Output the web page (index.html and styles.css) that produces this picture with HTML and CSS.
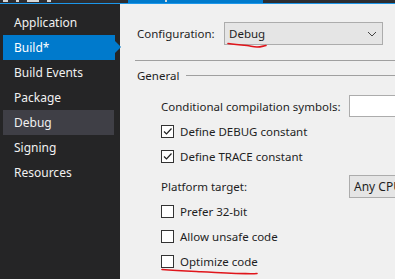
FILE: index.html
```html
<!DOCTYPE html>
<html lang="en">
<head>
    <meta charset="UTF-8">
    <meta name="viewport" content="width=device-width, initial-scale=1.0">
    <title>Project Properties - Build</title>
    <link rel="stylesheet" href="styles.css">
</head>
<body>
    <!-- Document tab strip, only its bottom edge is visible -->
    <div class="tab-strip">
        <div class="tab-ghost">
            <i class="mark" style="width: 5px"></i>
            <i class="mark" style="width: 3px"></i>
            <i class="mark" style="width: 12px"></i>
            <i class="mark" style="width: 4px"></i>
        </div>
        <div class="tab-active">
            <i class="mark" style="width: 2px"></i>
        </div>
    </div>

    <div class="window">
        <!-- Property pages list -->
        <ul class="nav">
            <li class="nav-item">Application</li>
            <li class="nav-item selected">Build*</li>
            <li class="nav-item">Build Events</li>
            <li class="nav-item">Package</li>
            <li class="nav-item hover">Debug</li>
            <li class="nav-item">Signing</li>
            <li class="nav-item">Resources</li>
        </ul>

        <!-- Build page -->
        <div class="page">
            <div class="config-row">
                <span class="label">Configuration:</span>
                <div class="combo config-combo">
                    <span>Debug</span>
                    <svg class="chevron" width="10" height="6" viewBox="0 0 10 6">
                        <path d="M1 1 L5 5 L9 1" fill="none" stroke="#444" stroke-width="1"/>
                    </svg>
                    <svg class="scribble scribble-debug" width="40" height="7" viewBox="0 0 40 7">
                        <path d="M1 1.5 C8 2.5 14 3 20 3.5 C24 4 26 5 30 5 C34 5 36 4 39 3.5" fill="none" stroke="#e0151b" stroke-width="1.6" stroke-linecap="round"/>
                    </svg>
                </div>
            </div>

            <div class="group">
                <div class="group-title">General</div>

                <div class="row symbols-row">
                    <span class="label field-label">Conditional compilation symbols:</span>
                    <div class="textbox"></div>
                </div>

                <label class="row check-row">
                    <span class="box checked">
                        <svg width="11" height="11" viewBox="0 0 11 11"><path d="M2 5.5 L4.5 8 L9.5 2.5" fill="none" stroke="#222" stroke-width="1.2"/></svg>
                    </span>
                    Define DEBUG constant
                </label>

                <label class="row check-row">
                    <span class="box checked">
                        <svg width="11" height="11" viewBox="0 0 11 11"><path d="M2 5.5 L4.5 8 L9.5 2.5" fill="none" stroke="#222" stroke-width="1.2"/></svg>
                    </span>
                    Define TRACE constant
                </label>

                <div class="row platform-row">
                    <span class="label field-label">Platform target:</span>
                    <div class="combo platform-combo">Any CPU</div>
                </div>

                <label class="row check-row">
                    <span class="box"></span>
                    Prefer 32-bit
                </label>

                <label class="row check-row">
                    <span class="box"></span>
                    Allow unsafe code
                </label>

                <label class="row check-row optimize">
                    <span class="box"></span>
                    Optimize code
                    <svg class="scribble scribble-optimize" width="98" height="8" viewBox="0 0 98 8">
                        <path d="M1 1.5 C15 2.5 25 3 40 3.8 C55 4.5 60 5 75 5.5 C85 5.5 90 6 96 5.5" fill="none" stroke="#e0151b" stroke-width="1.6" stroke-linecap="round"/>
                    </svg>
                </label>
            </div>
        </div>
    </div>
</body>
</html>
```

FILE: styles.css
```css
:root {
    --chrome: #2d2d30;
    --nav-bg: #252526;
    --accent: #007acc;
    --hover: #3f3f46;
    --page-bg: #f0f0f0;
    --text: #1e1e1e;
    --border: #acacac;
}

* {
    box-sizing: border-box;
}

body {
    margin: 0;
    font-family: "Noto Sans", "Open Sans", sans-serif;
    font-size: 11.5px;
    color: var(--text);
    background: var(--page-bg);
    overflow: hidden;
}

.tab-strip {
    display: flex;
    height: 4px;
    background: var(--chrome);
    border-bottom: 1px solid #1c97ea;
}

.tab-ghost {
    display: flex;
    gap: 8px;
    width: 128px;
    padding-left: 3px;
}

.tab-active {
    display: flex;
    width: 135px;
    background: var(--accent);
    padding-left: 37px;
}

.mark {
    display: block;
    height: 2px;
    background: #d8d8d8;
}

.window {
    display: flex;
    height: 275px;
}

.nav {
    list-style: none;
    margin: 0;
    padding: 6px 0 0;
    width: 120px;
    flex-shrink: 0;
    background: var(--nav-bg);
}

.nav-item {
    position: relative;
    height: 25px;
    line-height: 25px;
    margin: 0 6px 0 3px;
    padding-left: 11px;
    color: #f1f1f1;
    font-size: 12px;
}

.nav-item.selected {
    background: var(--accent);
    color: #fff;
    margin-right: 5px;
}

.nav-item.selected::after {
    content: "";
    position: absolute;
    right: -6px;
    top: 6px;
    border-left: 6px solid var(--accent);
    border-top: 6px solid transparent;
    border-bottom: 6px solid transparent;
}

.nav-item.hover {
    background: var(--hover);
}

.page {
    flex: 1;
    min-width: 0;
    padding: 18px 0 0 17px;
}

.config-row {
    display: flex;
    align-items: center;
    height: 23px;
    margin-bottom: 15px;
}

.config-row .label {
    width: 87px;
    flex-shrink: 0;
}

.combo {
    position: relative;
    display: flex;
    align-items: center;
    height: 23px;
    background: #e5e5e5;
    border: 1px solid var(--border);
    padding-left: 4px;
    white-space: nowrap;
}

.config-combo {
    width: 159px;
    flex-shrink: 0;
}

.chevron {
    position: absolute;
    right: 5px;
    top: 8px;
}

.scribble {
    position: absolute;
    pointer-events: none;
}

.scribble-debug {
    left: 2px;
    bottom: -5px;
}

.group {
    border-top: 1px solid #a0a0a0;
    margin-left: -2px;
    padding-left: 2px;
}

.group-title {
    display: flex;
    align-items: center;
    height: 28px;
    padding-top: 1px;
}

.group-title::after {
    content: "";
    flex: 1;
    height: 1px;
    background: #a0a0a0;
    margin-left: 7px;
}

.row {
    display: flex;
    align-items: center;
    padding-left: 24px;
    height: 25px;
    white-space: nowrap;
}

.symbols-row {
    height: 22px;
    margin: 6px 0 2px;
}

.field-label {
    width: 188px;
    flex-shrink: 0;
}

.textbox {
    width: 60px;
    height: 22px;
    background: #fff;
    border: 1px solid var(--border);
    flex-shrink: 0;
}

.platform-row {
    height: 22px;
    margin: 6px 0 2px;
}

.platform-combo {
    width: 60px;
    flex-shrink: 0;
    overflow: hidden;
    font-size: 12px;
}

.check-row {
    position: relative;
    gap: 6px;
}

.box {
    display: flex;
    align-items: center;
    justify-content: center;
    width: 13px;
    height: 13px;
    background: #fff;
    border: 1px solid #333;
}

.box svg {
    flex-shrink: 0;
}

.scribble-optimize {
    left: 24px;
    bottom: -2px;
}
```
